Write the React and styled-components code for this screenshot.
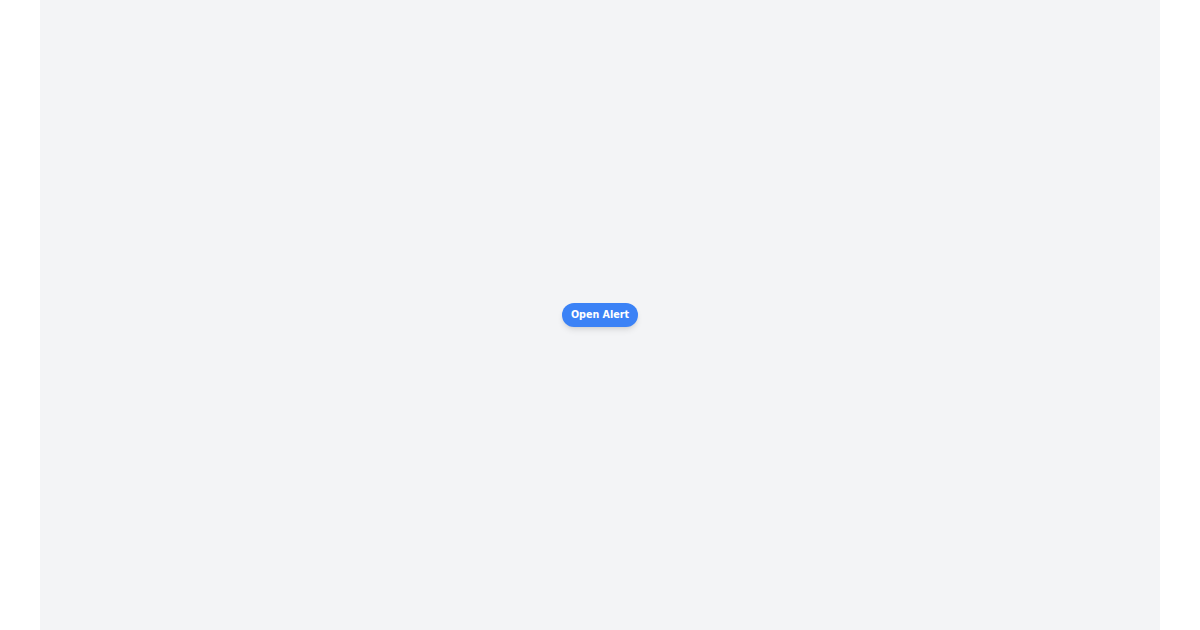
import styled, { createGlobalStyle } from "styled-components";

const GlobalStyle = createGlobalStyle`
    html, body {
        margin: 0;
        padding: 0;
        background: #ffffff;
        font-family: "DejaVu Sans", sans-serif;
    }
`;

const Stage = styled.div`
    max-width: 1120px;
    height: 630px;
    margin: 0 auto;
    background: #f3f4f6;
    display: flex;
    align-items: center;
    justify-content: center;
`;

const OpenButton = styled.button`
    height: 24px;
    padding: 0 9px 2px;
    border: none;
    border-radius: 12px;
    background: #3b82f6;
    color: #ffffff;
    font-family: "DejaVu Sans", sans-serif;
    font-size: 9.6px;
    font-weight: 700;
    box-shadow: 0 4px 6px -1px rgba(0, 0, 0, 0.1), 0 2px 4px -2px rgba(0, 0, 0, 0.1);
    cursor: pointer;
`;

const App = () => {
    return (
        <>
            <GlobalStyle />
            <Stage>
                <OpenButton>Open Alert</OpenButton>
            </Stage>
        </>
    );
};

export default App;
